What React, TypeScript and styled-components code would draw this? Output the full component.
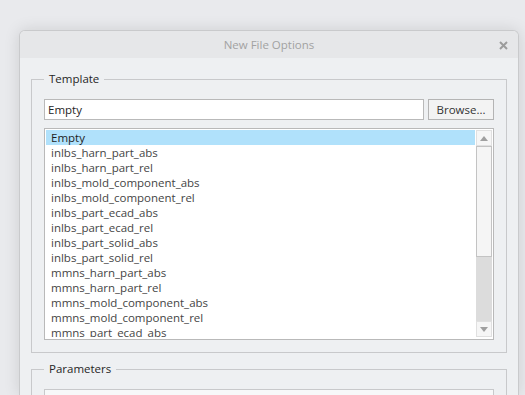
import React from "react";
import styled, { createGlobalStyle } from "styled-components";

const templates = [
  "Empty",
  "inlbs_harn_part_abs",
  "inlbs_harn_part_rel",
  "inlbs_mold_component_abs",
  "inlbs_mold_component_rel",
  "inlbs_part_ecad_abs",
  "inlbs_part_ecad_rel",
  "inlbs_part_solid_abs",
  "inlbs_part_solid_rel",
  "mmns_harn_part_abs",
  "mmns_harn_part_rel",
  "mmns_mold_component_abs",
  "mmns_mold_component_rel",
  "mmns_part_ecad_abs",
];

const Global = createGlobalStyle`
  html, body {
    margin: 0;
    height: 100%;
    overflow: hidden;
    background: #e9eaed;
    font-family: "Open Sans", "Noto Sans", "Liberation Sans", sans-serif;
    font-size: 11.5px;
  }
`;

const Page = styled.div`
  height: 100vh;
  box-sizing: border-box;
  padding: 30px 0 0 19px;
  overflow: hidden;
`;

const Dialog = styled.div`
  width: 498px;
  height: calc(100vh - 31px);
  border: 1px solid #c9cacc;
  border-bottom: none;
  border-radius: 6px 6px 0 0;
  background: #eef0f2;
  box-shadow: 0 0 16px rgba(0, 0, 0, 0.12);
  overflow: hidden;
`;

const TitleBar = styled.div`
  height: 27px;
  background: #e6e7e9;
  display: flex;
  align-items: center;
  justify-content: center;
  position: relative;
  color: #a2a2a2;
  font-size: 11.5px;
`;

const CloseButton = styled.span`
  position: absolute;
  right: 10px;
  top: 10px;
  display: flex;
`;

const Body = styled.div`
  padding: 13px 11px 0;
`;

const Group = styled.fieldset<{ $gap?: number }>`
  margin: ${(p) => p.$gap ?? 0}px 0 0;
  padding: 12px 12px 12px;
  border: 1px solid #c8c9cb;
  min-width: 0;
`;

const Legend = styled.legend`
  padding: 0 5px;
  line-height: 16px;
  color: #262626;
`;

const PathRow = styled.div`
  display: flex;
  gap: 4px;
  margin-bottom: 8px;
`;

const PathInput = styled.div`
  flex: 1;
  height: 19px;
  border: 1px solid #b9b9b9;
  background: #fff;
  display: flex;
  align-items: center;
  padding-left: 3px;
  color: #262626;
`;

const Button = styled.div`
  width: 64px;
  height: 19px;
  border: 1px solid #b4b4b4;
  background: #f3f3f3;
  display: flex;
  align-items: center;
  justify-content: center;
  color: #333;
`;

const ListBox = styled.div`
  height: 207px;
  border: 1px solid #b9b9b9;
  background: #fff;
  padding: 1px 1px 2px 1px;
  display: flex;
  overflow: hidden;
`;

const Rows = styled.div`
  flex: 1;
  overflow: hidden;
`;

const Row = styled.div<{ $selected?: boolean }>`
  height: 15px;
  line-height: 15px;
  padding-left: 5px;
  white-space: nowrap;
  color: ${(p) => (p.$selected ? "#1e1e1e" : "#454545")};
  background: ${(p) => (p.$selected ? "#b0e1fb" : "transparent")};
`;

const ScrollBar = styled.div`
  width: 16px;
  margin-left: 1px;
  display: flex;
  flex-direction: column;
  background: #dcdcdc;
`;

const ArrowBox = styled.div`
  height: 14px;
  border: 1px solid #e0e0e0;
  background: #f6f6f6;
  display: flex;
  align-items: center;
  justify-content: center;
`;

const Track = styled.div`
  flex: 1;
`;

const Thumb = styled.div`
  height: 109px;
  border: 1px solid #c3c3c3;
  background: #f5f5f5;
`;

const ParamBox = styled.div`
  height: 40px;
  border: 1px solid #c8c9cb;
  background: #f7f8f9;
`;

const Arrow = ({ down }: { down?: boolean }) => (
  <svg width="8" height="5" viewBox="0 0 8 5">
    <polygon points={down ? "0,0 8,0 4,5" : "0,5 8,5 4,0"} fill="#a0a0a0" />
  </svg>
);

const CloseIcon = () => (
  <svg width="9" height="9" viewBox="0 0 9 9">
    <path d="M1 1 L8 8 M8 1 L1 8" stroke="#9c9c9c" strokeWidth="2" />
  </svg>
);

export default function App() {
  return (
    <Page>
      <Global />
      <Dialog>
        <TitleBar>
          New File Options
          <CloseButton>
            <CloseIcon />
          </CloseButton>
        </TitleBar>
        <Body>
          <Group>
            <Legend>Template</Legend>
            <PathRow>
              <PathInput>Empty</PathInput>
              <Button>Browse...</Button>
            </PathRow>
            <ListBox>
              <Rows>
                {templates.map((t, i) => (
                  <Row key={t} $selected={i === 0}>
                    {t}
                  </Row>
                ))}
              </Rows>
              <ScrollBar>
                <ArrowBox>
                  <Arrow />
                </ArrowBox>
                <Track>
                  <Thumb />
                </Track>
                <ArrowBox>
                  <Arrow down />
                </ArrowBox>
              </ScrollBar>
            </ListBox>
          </Group>
          <Group $gap={8}>
            <Legend>Parameters</Legend>
            <ParamBox />
          </Group>
        </Body>
      </Dialog>
    </Page>
  );
}
